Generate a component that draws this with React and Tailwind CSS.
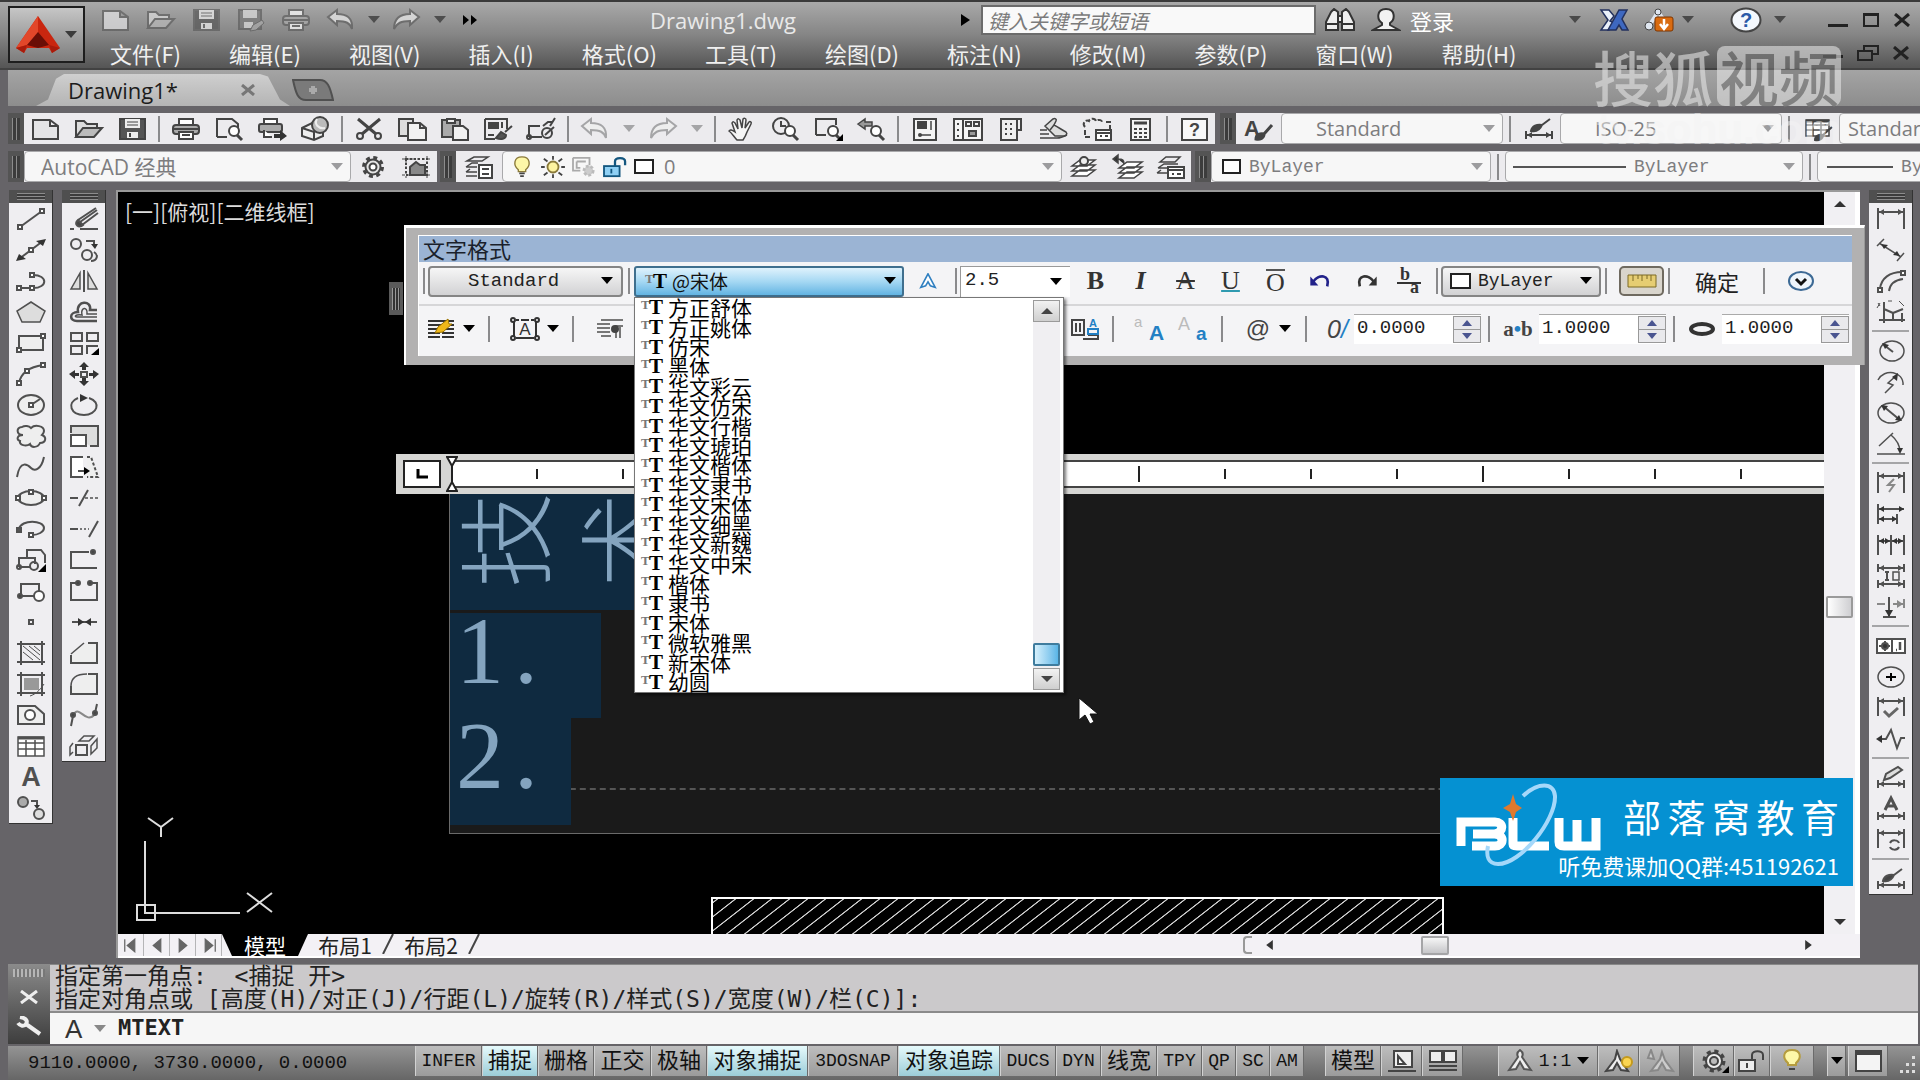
import clsx from 'clsx';

const dim = (y = 5) => (
  <>
    <path d={`M2 ${y}H28M2 ${y - 4}V${y + 4}M28 ${y - 4}V${y + 4}`} />
    <path d={`M3 ${y}l5-3v6zM27 ${y}l-5-3v6z`} fill="currentColor" stroke="none" />
  </>
);

const magnifier = (
  <>
    <circle cx="20" cy="14" r="5" fill="#fff" />
    <path d="M23 18l5 5" strokeWidth="3" />
  </>
);

const printer = (
  <>
    <path d="M8 8V2h14v6" fill="#fff" />
    <rect x="2" y="8" width="26" height="9" rx="3" fill="#aaa" />
    <path d="M2 12h26" />
    <rect x="8" y="15" width="14" height="7" fill="#fff" />
    <path d="M11 18h8" />
  </>
);

const layers = <path d="M3 21h15l8-6H11zM3 16h15l8-6H11zM3 11h15l8-6H11z" fill="#fff" strokeWidth="1.5" />;

const ICONS = {
  new: <path d="M2 3h17l8 6v13H2zM19 3v6h8" fill="#e4e4e6" />,
  open: (
    <>
      <path d="M2 20V4h8l3 3h10v4" fill="#ddd" />
      <path d="M2 20l7-9h19l-8 9z" fill="#bbb" />
    </>
  ),
  save: (
    <>
      <rect x="3" y="2" width="25" height="20" fill="#555" />
      <rect x="8" y="2" width="15" height="9" fill="#eee" stroke="none" />
      <path d="M10 5h11M10 8h11" strokeWidth="1" />
      <rect x="10" y="15" width="11" height="6" fill="#eee" stroke="none" />
      <path d="M13 16v4" />
    </>
  ),
  saveas: (
    <>
      <rect x="3" y="2" width="22" height="19" fill="#777" />
      <rect x="7" y="2" width="14" height="8" fill="#ddd" stroke="none" />
      <rect x="8" y="14" width="9" height="6" fill="#ddd" stroke="none" />
      <path d="M14 23l3-6 9-5 2 3-8 7z" fill="#aaa" strokeWidth="1" />
    </>
  ),
  print: printer,
  preview: (
    <>
      <path d="M3 20V2h15l6 5v4M3 20h10" />
      {magnifier}
    </>
  ),
  publish: (
    <>
      <path d="M7 7V2h13v5" fill="#fff" />
      <rect x="2" y="7" width="23" height="8" rx="2" fill="#aaa" />
      <path d="M7 13v7h8" fill="#fff" />
      <path d="M17 17h6v-4l7 6-7 5v-3h-6z" fill="#333" stroke="none" />
    </>
  ),
  print3d: (
    <>
      <path d="M2 11l10-5 11 4v9l-9 4-12-4zM2 11l12 4 9-4M14 15v8" fill="#eee" />
      <circle cx="20" cy="8" r="8" fill="#bbb" />
      <path d="M17 2c-3 5 1 10 8 9" stroke="#eee" />
    </>
  ),
  cut: (
    <>
      <path d="M4 2l18 15M26 2L8 17" strokeWidth="3" />
      <circle cx="6" cy="19" r="3" />
      <circle cx="24" cy="19" r="3" />
    </>
  ),
  copy: (
    <>
      <path d="M2 2h14v4h-5v13H2z" fill="#ddd" />
      <path d="M11 6h12l6 5v12H11zM23 6v5h6" fill="#f2f2f2" />
    </>
  ),
  paste: (
    <>
      <path d="M2 3h18v17H2z" fill="#aaa" />
      <path d="M7 2h8v4H7z" fill="#eee" />
      <path d="M13 9h10l5 4v10H13z" fill="#f2f2f2" />
    </>
  ),
  match: (
    <>
      <path d="M2 2h22v10M2 2v20h10" />
      <rect x="5" y="5" width="11" height="7" fill="currentColor" stroke="none" />
      <path d="M19 5v6M5 18h6" />
      <path d="M13 21l5-6 5 3c0 4-5 5-10 3zM22 15l7-6" fill="#555" />
    </>
  ),
  block: (
    <>
      <path d="M3 20V9h11M3 20h13M17 9l5-4h5M24 9l5-8" />
      <circle cx="21" cy="16" r="5" />
      <circle cx="3" cy="20" r="2" />
      <path d="M19 18l9-8" />
    </>
  ),
  undo: <path d="M2 9l9-7v4c10 0 16 4 15 15-2-6-6-8-15-8v4z" fill="#eee" />,
  redo: <path d="M28 9l-9-7v4C9 6 3 10 3 21c3-6 7-8 16-8v4z" fill="#eee" />,
  pan: (
    <path
      d="M10 23c-3-3-5-7-8-9 1-2 3-1 6 1L5 6c1-2 2-1 3 0l3 6-1-9c1-2 2-1 3 0l2 8 1-9c1-1 3-1 3 1l-1 8 4-6c1-1 3 0 2 2l-4 8c-1 3-2 5-4 8z"
      fill="#f5f5f5"
      strokeWidth="1.5"
    />
  ),
  zoomrt: (
    <>
      <circle cx="11" cy="9" r="8" />
      <path d="M11 4v5h5" />
      {magnifier}
    </>
  ),
  zoomwin: (
    <>
      <path d="M3 18V2h20v6M3 18h10" />
      {magnifier}
      <path d="M30 17v7h-7z" fill="#000" stroke="none" />
    </>
  ),
  zoomprev: (
    <>
      <path d="M2 7l7-5v3h7v4H9v3z" fill="#999" strokeWidth="1.5" />
      {magnifier}
    </>
  ),
  props: (
    <>
      <rect x="4" y="2" width="22" height="21" fill="#f4f4f4" />
      <rect x="7" y="4" width="10" height="8" fill="currentColor" stroke="none" />
      <path d="M21 4v9M9 18h12" strokeWidth="1.5" />
      <circle cx="10" cy="18" r="1" />
    </>
  ),
  design: (
    <>
      <rect x="1" y="2" width="28" height="21" fill="#f4f4f4" />
      <path d="M10 2v21M5 6v2M5 12v2M5 18v2" />
      <rect x="13" y="5" width="5" height="4" />
      <rect x="21" y="5" width="5" height="4" />
      <rect x="16" y="14" width="7" height="5" fill="#999" />
    </>
  ),
  palette: (
    <>
      <path d="M5 2h20v11h-4v10H5z" fill="#eee" />
      <path d="M21 2v11M9 7h2M14 7h2M9 12h2M14 12h2M9 17h2M14 17h2" />
    </>
  ),
  sheets: (
    <>
      <path d="M1 21h17c4 0 6-1 10-3M1 17h9M1 13h7" strokeWidth="1.5" />
      <path d="M6 9l8-7c2-1 4 0 3 2l-2 4c4 2 8 5 12 7 2 2 0 4-3 4h-8L6 9z" fill="#ddd" strokeWidth="1.5" />
      <path d="M15 8l-4 5" strokeWidth="1.5" />
    </>
  ),
  markup: (
    <>
      <path d="M3 10c-3-3 0-8 4-6 1-3 6-3 7 0 2-2 6-1 6 1M24 5h4v7M3 13v7h6" strokeDasharray="5 2" />
      <rect x="14" y="13" width="15" height="10" fill="#fff" />
      <path d="M14 16h15M18 19h2M23 19h3" />
    </>
  ),
  calc: (
    <>
      <rect x="6" y="2" width="19" height="21" fill="#f4f4f4" />
      <path d="M9 6h13" strokeWidth="3" />
      <path d="M9 12h3M14 12h3M19 12h3M9 16h3M14 16h3M19 16h3M9 20h3M14 20h3M19 20h3" />
    </>
  ),
  help: (
    <>
      <rect x="3" y="2" width="25" height="21" fill="#f8f8f8" />
      <text x="15.5" y="19" textAnchor="middle" fontSize="18" fontWeight="700" fill="currentColor" stroke="none">?</text>
    </>
  ),
  textstyle: (
    <>
      <text x="0" y="19" fontSize="22" fontWeight="700" fill="currentColor" stroke="none">A</text>
      <path d="M12 22c0-4 4-6 8-5 0 4-4 6-8 5zM20 17l8-9" fill="#444" strokeWidth="3" />
    </>
  ),
  dimstyle: (
    <>
      {dim(18)}
      <path d="M7 14c1-5 6-7 11-6-2 5-6 7-11 6zM18 8l8-6" fill="#444" />
    </>
  ),
  tablestyle: (
    <>
      <path d="M3 3h23v16H3zM3 8h23M3 13h23M10 3v16M18 3v16" strokeWidth="1.5" fill="#fff" />
      <path d="M3 4h23" strokeWidth="3" />
      <path d="M12 23c0-4 4-6 8-5 0 4-4 6-8 5zM20 18l9-8" fill="#444" />
    </>
  ),
  gear: (
    <>
      <circle cx="15" cy="12" r="9.5" strokeWidth="3" strokeDasharray="4 3.46" />
      <circle cx="15" cy="12" r="7.5" fill="#e4e4e4" />
      <circle cx="15" cy="12" r="3.5" fill="#fff" />
    </>
  ),
  workspace: (
    <>
      <path d="M5 4h21v16H5z" strokeDasharray="2 2" />
      <path d="M9 20v-8l6-5 4 3h5v10z" fill="#888" />
      <path d="M5 1v22M26 1v22M1 4h28M1 20h28" strokeWidth="1" strokeDasharray="3 2" />
    </>
  ),
  layerprops: (
    <>
      <path d="M3 6l7-4h14l-6 4zM2 12l6-4h6M2 12h11M2 17l4-3M2 17h11M2 21h11" strokeWidth="1.5" />
      <rect x="15" y="10" width="13" height="13" fill="#fff" />
      <path d="M18 14h7M18 19h7" />
    </>
  ),
  layercur: (
    <>
      {layers}
      <circle cx="15" cy="6" r="4" fill="#eee" />
    </>
  ),
  layerprev: (
    <>
      <g transform="translate(4 2)">{layers}</g>
      <path d="M1 4l5-4v8zM6 4c5 0 6 1 6 5" fill="#333" strokeWidth="1.5" />
    </>
  ),
  layerstate: (
    <>
      <path d="M5 7l6-5h14l-5 5zM3 13l6-4h14M3 13h9M2 18h10M2 18l4-3" strokeWidth="1.5" />
      <rect x="13" y="12" width="16" height="11" fill="#fff" />
      <path d="M13 15h16M17 19h2M22 19h4" />
    </>
  ),
  bulb: (
    <>
      <path d="M15 1c-9 0-10 9-4 14v2h8v-2c6-5 5-14-4-14z" fill="#fdf7a8" stroke="#8a7a3a" strokeWidth="1.5" />
      <path d="M12 19h6M13 22h4" />
    </>
  ),
  sun: (
    <>
      <path d="M15 0v4M15 20v4M2 12h4M24 12h4M5 3l4 3M21 18l4 3M25 3l-4 3M9 18l-4 3" />
      <circle cx="15" cy="12" r="6" fill="#fdf3a0" stroke="#8a7a3a" />
    </>
  ),
  vpfreeze: (
    <>
      <path d="M3 2h18v8M3 2v14h8M7 6h10M7 6v7h4" stroke="#aaa" />
      <circle cx="20" cy="16" r="5" fill="#ccc" stroke="#bbb" strokeDasharray="3 2" strokeWidth="3" />
    </>
  ),
  unlock: (
    <>
      <rect x="3" y="11" width="17" height="11" fill="#8fd0f4" stroke="#14577f" />
      <path d="M15 11V6c0-5 11-5 11 0v4" stroke="#14577f" strokeWidth="2.5" />
      <path d="M11 14v5" stroke="#14577f" />
    </>
  ),
  line: (
    <>
      <path d="M4 20L26 4" />
      <rect x="2" y="18" width="4" height="4" fill="#fff" />
      <rect x="24" y="2" width="4" height="4" fill="#fff" />
    </>
  ),
  xline: (
    <>
      <path d="M3 21L27 3" />
      <path d="M30 1l-3 7-7-5zM0 23l3-7 7 5z" fill="#333" stroke="none" />
      <rect x="13" y="10" width="4" height="4" fill="#fff" />
    </>
  ),
  pline: (
    <>
      <path d="M3 19h14c15 0 15-13 0-13" />
      <rect x="1" y="17" width="4" height="4" fill="#fff" />
      <rect x="14" y="17" width="4" height="4" fill="#fff" />
      <rect x="14" y="4" width="4" height="4" fill="#fff" />
    </>
  ),
  polygon: <path d="M15 2l14 9-5 11H6L1 11z" fill="#ddd" strokeWidth="1.5" />,
  rect: (
    <>
      <path d="M3 5h24v14H3z" fill="#eee" />
      <rect x="1" y="17" width="4" height="4" fill="#fff" />
      <rect x="25" y="3" width="4" height="4" fill="#fff" />
    </>
  ),
  arc: (
    <>
      <path d="M3 21C5 11 13 5 27 3" />
      <rect x="1" y="19" width="4" height="4" fill="#fff" />
      <rect x="9" y="7" width="4" height="4" fill="#fff" />
      <rect x="25" y="1" width="4" height="4" fill="#fff" />
    </>
  ),
  circle: (
    <>
      <ellipse cx="15" cy="12" rx="13" ry="10" fill="#eee" />
      <path d="M15 12l9-6" />
      <rect x="13" y="10" width="4" height="4" fill="#fff" />
    </>
  ),
  cloud: <path d="M7 11C0 11 0 3 6 3c3-2 7-1 9 1 4-4 13-2 13 3 0 2-1 3-2 4 5 2 4 8-2 8-2 5-9 5-10 1-4 3-11 1-10-3-4-1-3-6 3-6z" fill="#eee" />,
  spline: <path d="M1 22C4 4 12 10 15 13s10 3 13-11" />,
  ellipse: (
    <>
      <ellipse cx="15" cy="12" rx="13" ry="7" fill="#eee" />
      <rect x="0" y="10" width="4" height="4" fill="#fff" />
      <rect x="13" y="4" width="4" height="4" fill="#fff" />
      <rect x="26" y="10" width="4" height="4" fill="#fff" />
    </>
  ),
  ellipsearc: (
    <>
      <path d="M3 12C5 2 28 3 28 11c0 4-6 7-12 7" />
      <rect x="1" y="11" width="4" height="4" fill="#555" />
      <rect x="13" y="16" width="4" height="4" fill="#fff" />
    </>
  ),
  insert: (
    <>
      <path d="M11 9V2h14l4 5v8M3 19v-9h16v6M3 19h12" />
      <circle cx="3" cy="19" r="2" />
      <circle cx="18" cy="18" r="4" />
      <path d="M30 16v8h-8z" fill="#000" stroke="none" />
    </>
  ),
  makeblock: (
    <>
      <path d="M5 17V5h18v9M3 17h15" />
      <circle cx="4" cy="17" r="2" fill="#444" />
      <circle cx="23" cy="17" r="5" fill="#fff" />
    </>
  ),
  point: <rect x="13" y="10" width="4" height="4" />,
  hatch: (
    <>
      <path d="M1 3h28M1 21h28M5 0v24M26 0v24" />
      <path d="M7 5l17 14M7 11l10 8M13 5l11 9M18 5l6 5" strokeWidth="1" />
    </>
  ),
  gradient: (
    <>
      <path d="M1 3h28M1 21h28M5 0v24M26 0v24" />
      <rect x="8" y="6" width="15" height="12" fill="#999" stroke="none" />
      <path d="M14 24c6-2 10-6 14-12" strokeWidth="1" />
    </>
  ),
  region: (
    <>
      <path d="M2 3h17l9 8v10H2z" fill="#eee" />
      <circle cx="14" cy="12" r="5" fill="#fff" />
    </>
  ),
  table: (
    <>
      <path d="M2 3h26v19H2zM2 9h26M2 15h26M10 6v16M19 6v16" fill="#fff" strokeWidth="1.5" />
      <path d="M2 4h26" strokeWidth="3" />
    </>
  ),
  mtext: (
    <text x="15" y="21" textAnchor="middle" fontSize="27" fontWeight="700" fill="currentColor" stroke="none">A</text>
  ),
  addsel: (
    <>
      <circle cx="7" cy="6" r="5" fill="#aaa" />
      <circle cx="23" cy="18" r="5" fill="#ddd" />
      <path d="M15 5h6v5" />
      <path d="M18 9h6l-3 4z" fill="#333" stroke="none" />
    </>
  ),
  erase: (
    <>
      <path d="M1 22h4M11 22h18" />
      <path d="M9 13L27 1M13 18L29 6M11 15L28 3" />
      <path d="M9 13l5 5c-4 4-10-1-5-5z" fill="#444" />
    </>
  ),
  copyobj: (
    <>
      <circle cx="7" cy="6" r="5" />
      <circle cx="18" cy="17" r="5" />
      <path d="M25 14c5 3 3 9-3 9M17 3h8v4" />
      <path d="M22 6h7l-3 5z" fill="#333" stroke="none" />
    </>
  ),
  mirror: (
    <>
      <path d="M15 1v22" />
      <path d="M11 4v16H2zM19 4v16h9z" fill="#ddd" strokeWidth="1.5" />
    </>
  ),
  offset: (
    <>
      <path d="M28 21H8c-8 0-8-9 1-9C7 0 23 0 21 10h7" strokeWidth="2.5" />
      <path d="M28 17H8c-3 0-2-3 5-2-2-8 6-9 5-1h10" strokeWidth="1.5" />
    </>
  ),
  array: (
    <>
      <rect x="2" y="2" width="11" height="8" />
      <rect x="18" y="2" width="11" height="8" />
      <rect x="2" y="15" width="11" height="8" />
      <path d="M18 23v-8h11" />
      <path d="M30 17v7h-8z" fill="#000" stroke="none" />
    </>
  ),
  move: (
    <>
      <rect x="12" y="10" width="6" height="5" />
      <path d="M15 0l5 5h-3v3h-4V5h-3zM15 24l5-5h-3v-3h-4v3h-3zM0 12l6-4v3h4v3H6v3zM30 12l-6-4v3h-4v3h4v3z" fill="#333" stroke="none" />
    </>
  ),
  rotate: (
    <>
      <path d="M20 5c13 4 8 17-5 17S-3 10 9 5" />
      <path d="M11 1l8 4-8 4z" fill="#333" stroke="none" />
    </>
  ),
  scale: (
    <>
      <path d="M2 9V2h27v20h-8" fill="#ddd" />
      <rect x="2" y="11" width="15" height="11" fill="#fff" />
    </>
  ),
  stretch: (
    <>
      <path d="M14 22H2V2h12" fill="#fff" />
      <path d="M18 2h4l7 20H18" strokeDasharray="3 2" fill="#eee" />
      <path d="M9 16h8" />
      <path d="M15 12l6 4-6 4z" fill="#000" stroke="none" />
    </>
  ),
  trim: (
    <>
      <path d="M1 12h8M10 20l9-16" />
      <path d="M16 12h14" strokeDasharray="3 2" strokeWidth="1.5" />
    </>
  ),
  extend: (
    <>
      <path d="M1 12h8M20 20l9-16" />
      <path d="M11 12h9" strokeDasharray="2 2" strokeWidth="1.5" />
    </>
  ),
  breakpt: (
    <>
      <path d="M28 20H2V4h18" />
      <circle cx="24" cy="4" r="2" fill="#444" />
    </>
  ),
  break: (
    <>
      <path d="M8 4H2v17h26V4h-6" />
      <circle cx="9" cy="4" r="2" fill="#444" />
      <circle cx="21" cy="4" r="2" fill="#444" />
    </>
  ),
  join: (
    <>
      <path d="M3 12h25" />
      <path d="M9 8l6 4-6 4zM22 8l-6 4 6 4z" fill="#333" stroke="none" />
    </>
  ),
  chamfer: (
    <>
      <path d="M2 14v8h26V2h-9" fill="#eee" />
      <path d="M2 13L15 2" strokeWidth="1.5" />
    </>
  ),
  fillet: (
    <>
      <path d="M2 14v8h26V2h-9" fill="#eee" />
      <path d="M2 14C2 6 8 2 18 2" strokeWidth="1.5" />
    </>
  ),
  blend: (
    <>
      <path d="M2 23l2-10M26 10l2-9" />
      <path d="M4 13c6-14 12 10 22-2" stroke="#888" />
      <circle cx="4" cy="12" r="2" fill="#444" />
      <circle cx="26" cy="10" r="2" fill="#444" />
    </>
  ),
  explode: (
    <>
      <rect x="7" y="11" width="11" height="10" />
      <path d="M10 7l5-5h10l-5 5zM22 12l6-7v9l-6 6zM4 9l-3 4v8l3-3" strokeWidth="1.5" />
    </>
  ),
  dimlinear: (
    <>
      {dim(5)}
      <path d="M2 8v14M28 8v14" />
    </>
  ),
  dimaligned: (
    <>
      <path d="M3 5l22 14M1 8l7-7M21 23l7-8" strokeWidth="1.5" />
      <path d="M5 6l7 1-4 4zM24 18l-7-1 4-4z" fill="#333" stroke="none" />
    </>
  ),
  dimarc: (
    <>
      <path d="M4 20C5 9 14 3 26 3M13 22c1-7 6-11 14-12" />
      <rect x="2" y="19" width="4" height="4" fill="#fff" />
      <rect x="25" y="2" width="4" height="4" fill="#fff" />
    </>
  ),
  dimord: (
    <>
      <path d="M8 2v21M3 20h26M8 9l9 4v8M17 13l10-4M26 13v9" />
      <path d="M2 3l2 3M4 3L1 8M12 1h4M23 1l5 5" strokeWidth="1" />
    </>
  ),
  dimradius: (
    <>
      <ellipse cx="16" cy="12" rx="12" ry="10" strokeWidth="1.5" />
      <path d="M17 13L8 6" />
      <path d="M6 4l7 2-4 4z" fill="#333" stroke="none" />
    </>
  ),
  dimjog: (
    <>
      <path d="M2 10C8-2 28 1 27 15" strokeWidth="1.5" />
      <path d="M9 23l8-8-5-2 9-8" strokeWidth="1.5" />
      <path d="M22 3l-1 8-5-4z" fill="#333" stroke="none" />
    </>
  ),
  dimdiam: (
    <>
      <ellipse cx="15" cy="12" rx="13" ry="10" strokeWidth="1.5" />
      <path d="M7 5l17 14" />
      <path d="M5 4l7 1-4 5zM26 20l-7-1 4-5z" fill="#333" stroke="none" />
    </>
  ),
  dimang: (
    <>
      <path d="M1 22h28M3 14L17 1M15 3c6 5 9 10 9 17" strokeWidth="1.5" />
      <path d="M24 22l-3-6h6z" fill="#333" stroke="none" />
    </>
  ),
  dimquick: (
    <>
      {dim(5)}
      <path d="M2 8v14M28 8v14" />
      <path d="M18 8l-6 6h6l-5 7" stroke="#888" />
    </>
  ),
  dimbase: (
    <>
      <path d="M2 2v20M2 7h26M2 17h19M21 12v10" />
      <path d="M3 7l5-3v6zM28 7l-5-3v6zM3 17l5-3v6zM21 17l-5-3v6z" fill="#333" stroke="none" />
    </>
  ),
  dimcont: (
    <>
      <path d="M2 2v20M15 2v20M28 2v20M2 8h26" />
      <path d="M3 8l5-3v6zM14 8L9 5v6zM16 8l5-3v6zM27 8l-5-3v6z" fill="#333" stroke="none" />
    </>
  ),
  dimspace: (
    <>
      {dim(4)}
      {dim(20)}
      <path d="M11 8v8M9 8h4M9 16h4" />
      <rect x="17" y="8" width="6" height="8" strokeWidth="1.5" />
    </>
  ),
  dimbreak: (
    <>
      <path d="M13 2v19M7 22h13" />
      <path d="M1 9h8M17 9h10M28 4v9" stroke="#888" />
      <path d="M9 15h8l-4 7z" fill="#333" stroke="none" />
      <path d="M27 9l-6-4v8z" fill="#888" stroke="none" />
    </>
  ),
  tolerance: (
    <>
      <rect x="1" y="5" width="28" height="14" fill="#fff" />
      <path d="M16 5v14M3 12h11M9 7v10" />
      <circle cx="9" cy="12" r="3" fill="#333" />
      <path d="M24 8v8M20 16h1" strokeWidth="2.5" />
    </>
  ),
  centermark: (
    <>
      <ellipse cx="15" cy="12" rx="13" ry="10" strokeWidth="1.5" />
      <path d="M15 8v8M10 12h10" stroke="#000" />
    </>
  ),
  inspect: (
    <>
      {dim(5)}
      <path d="M2 8v12M28 8v12" />
      <path d="M8 15l5 5 9-8" strokeWidth="3" stroke="#666" />
    </>
  ),
  jogline: (
    <>
      <path d="M3 12h7l5-9 6 18 4-10h4" />
      <path d="M0 12l6-4v8z" fill="#333" stroke="none" />
    </>
  ),
  dimedit: (
    <>
      {dim(18)}
      <path d="M8 14l2-6L22 1l4 3-12 8z" fill="#ddd" />
    </>
  ),
  dimtedit: (
    <>
      {dim(19)}
      <path d="M9 13l6-12 6 12M11 9h8" strokeWidth="3" />
    </>
  ),
  dimupdate: (
    <>
      {dim(5)}
      <path d="M2 8v12M28 8v12M14 15c2-4 8-3 9 0M23 19c-2 4-8 3-9 0" />
    </>
  ),
};

function Icon({ name, className = 'w-[30px] h-[24px]' }) {
  return (
    <svg viewBox="0 0 30 24" className={clsx('shrink-0 overflow-visible', className)} fill="none" stroke="currentColor" strokeWidth="2" aria-hidden="true" fontFamily="Liberation Sans, sans-serif">
      {ICONS[name]}
    </svg>
  );
}

const Caret = ({ className = 'text-black' }) => (
  <svg viewBox="0 0 12 8" className={clsx('w-[12px] h-[8px] shrink-0 pointer-events-none', className)} fill="currentColor" aria-hidden="true">
    <path d="M0 0h12L6 7z" />
  </svg>
);

const Sep = ({ className = 'w-[11px]' }) => (
  <div className={clsx('flex justify-center items-center shrink-0', className)}>
    <div className="w-[2px] h-[26px] bg-[#8a8a8c]" />
  </div>
);

const Grip = ({ className = '' }) => (
  <div className={clsx('w-[16px] h-full shrink-0 bg-[#545454] flex items-center justify-center', className)}>
    <div className="w-[8px] h-[22px] bg-[repeating-linear-gradient(90deg,#8c8c8c_0_1px,#3c3c3c_1px_4px)]" />
  </div>
);

const Tool = ({ icon, className = 'w-[43px]' }) => (
  <button aria-label={icon} className={clsx('h-full shrink-0 flex items-center justify-center', className)}>
    <Icon name={icon} />
  </button>
);

const ToolGroup = ({ icons }) => icons.map((n) => <Tool key={n} icon={n} />);

// Flat grey drop-down used in the docked toolbars
function Combo({ label, value, className, inner = 'pl-[16px]', lead, font = "text-[20px] font-['Open_Sans','Noto_Sans_CJK_SC',sans-serif]" }) {
  return (
    <div className={clsx('h-full shrink-0 flex items-center gap-[8px] bg-[#f7f7f7] border border-[#a9a9ab] rounded-[4px] pr-[7px]', className)}>
      {lead}
      <select aria-label={label} className={clsx('flex-1 min-w-0 h-full appearance-none bg-transparent leading-[28px] text-[#7d7d7f] outline-none', inner, font)}>
        <option>{value}</option>
      </select>
      <Caret className="text-[#9c9c9e]" />
    </div>
  );
}

const MONO = "font-['Liberation_Mono','Noto_Sans_CJK_SC',monospace]";
const MONO_COMBO = "text-[18px] font-['Liberation_Mono','Noto_Sans_CJK_SC',monospace]";

const MENUS = ['文件(F)', '编辑(E)', '视图(V)', '插入(I)', '格式(O)', '工具(T)', '绘图(D)', '标注(N)', '修改(M)', '参数(P)', '窗口(W)', '帮助(H)'];

function Header() {
  return (
    <header className="h-[70px] shrink-0 flex border-t-2 border-t-[#3a3a3a] border-b-2 border-b-[#424242] bg-linear-to-b from-[#a9a9a9] via-[#858585] to-[#555555]">
      <button aria-label="应用程序菜单" className="ml-[8px] mt-[4px] w-[77px] h-[57px] shrink-0 flex items-center justify-center gap-[5px] border-2 border-[#1e1e1e] bg-linear-to-b from-[#c6c6c6] to-[#7e7e7e]">
        <svg viewBox="0 0 44 38" className="w-[44px] h-[38px]" aria-hidden="true">
          <path d="M22 0L0 32l8 5 3-5h22l3 5 8-5z" fill="#c9260f" />
          <path d="M22 0L0 32l11-3 11-9z" fill="#e2472a" />
          <path d="M22 16L11 29l11 3 11-3z" fill="#6a0e06" />
          <path d="M33 29l3 8 8-5zM11 29l-3 8-8-5z" fill="#a81c0c" />
        </svg>
        <Caret className="text-[#3b3b3b]" />
      </button>
      <div className="flex-1 min-w-0 flex flex-col">
        <div className="h-[36px] flex items-center pl-[8px]">
          <div className="flex items-center h-full text-[#5e5e5e]">
            {['new', 'open', 'save', 'saveas', 'print'].map((n) => <Tool key={n} icon={n} className="w-[45px] opacity-70" />)}
            <Tool icon="undo" className="w-[45px] opacity-70" />
            <button aria-label="放弃列表" className="w-[22px] flex justify-center"><Caret className="text-[#4e4e4e]" /></button>
            <Tool icon="redo" className="w-[41px] opacity-70" />
            <button aria-label="重做列表" className="w-[28px] flex justify-center"><Caret className="text-[#4e4e4e]" /></button>
            <button aria-label="更多" className="w-[32px] flex justify-center">
              <svg viewBox="0 0 14 10" className="w-[14px] h-[10px]" aria-hidden="true"><path d="M0 0l6 5-6 5zM8 0l6 5-6 5z" /></svg>
            </button>
          </div>
          <h1 className="flex-1 min-w-0 pl-[164px] text-[22px] leading-[28px] text-[#e9e9e9] whitespace-nowrap font-['Open_Sans',sans-serif]">Drawing1.dwg</h1>
          <svg viewBox="0 0 9 12" className="w-[9px] h-[12px] mr-[11px]" aria-hidden="true"><path d="M0 0l9 6-9 6z" /></svg>
          <input aria-label="搜索" placeholder="键入关键字或短语" className="w-[335px] h-[30px] px-[5px] border-2 border-[#6b6b6b] bg-[#f9f9f9] text-[20px] leading-[26px] italic placeholder:text-[#7b7b7b] font-['Noto_Sans_CJK_SC',sans-serif]" />
          <button aria-label="查找" className="w-[48px] flex justify-center">
            <svg viewBox="0 0 30 24" className="w-[30px] h-[24px]" fill="#eee" stroke="#333" strokeWidth="2" aria-hidden="true">
              <path d="M6 4l3-3 4 3v18H1v-8zM24 4l-3-3-4 3v18h12v-8zM13 8h4v6h-4zM1 16h12M17 16h12" />
            </svg>
          </button>
          <button className="w-[107px] flex items-center gap-[9px] pl-[7px] text-[22px] leading-[28px] text-white whitespace-nowrap font-['Noto_Sans_CJK_SC',sans-serif]">
            <svg viewBox="0 0 30 24" className="w-[30px] h-[24px]" fill="#f2f2f2" stroke="#333" strokeWidth="2" aria-hidden="true">
              <path d="M15 1c10 0 9 11 4 14v2l9 5H2l9-5v-2C6 12 5 1 15 1z" />
            </svg>
            登录
          </button>
          <Caret className="ml-[98px] text-[#4a4a4a]" />
          <button aria-label="Exchange" className="ml-[18px] w-[30px]">
            <svg viewBox="0 0 30 24" className="w-[30px] h-[24px]" stroke="#23315e" strokeWidth="1.5" aria-hidden="true">
              <path d="M2 2h8l5 6-4 5 4 2-5 7H2l7-10z" fill="#e9f0fa" />
              <path d="M28 2h-8L9 22h8l3-5 3 5h6l-6-11z" fill="#3e68c0" />
            </svg>
          </button>
          <button aria-label="保持连接" className="ml-[15px] w-[30px]">
            <svg viewBox="0 0 30 24" className="w-[30px] h-[24px]" fill="none" aria-hidden="true">
              <path d="M5 18L14 4l5 7" stroke="#dfe6f0" strokeWidth="4" />
              <circle cx="5" cy="18" r="4" fill="#dfe6f0" stroke="#444" />
              <circle cx="14" cy="4" r="3" fill="#dfe6f0" stroke="#444" />
              <rect x="11" y="9" width="18" height="14" rx="2" fill="#d96b10" stroke="#7c3500" />
              <path d="M20 11v9M16 16l4 5 4-5" stroke="#fff" strokeWidth="2.5" />
            </svg>
          </button>
          <Caret className="ml-[8px] text-[#4a4a4a]" />
          <button aria-label="帮助" className="ml-[36px] w-[32px]">
            <svg viewBox="0 0 32 26" className="w-[32px] h-[26px]" aria-hidden="true">
              <ellipse cx="16" cy="13" rx="14.5" ry="11.5" fill="#f4f8fd" stroke="#444" strokeWidth="2" />
              <text x="16" y="20" textAnchor="middle" fontSize="20" fontWeight="700" fill="#2a59a8" fontFamily="Liberation Sans">?</text>
            </svg>
          </button>
          <Caret className="ml-[12px] mr-[42px] text-[#4a4a4a]" />
          <div className="flex items-center gap-[15px] mr-[10px]">
            <button aria-label="最小化" className="w-[20px] h-[14px] border-b-[3px] border-[#222]" />
            <button aria-label="最大化" className="w-[16px] h-[14px] border-2 border-t-[3px] border-[#222]" />
            <button aria-label="关闭">
              <svg viewBox="0 0 16 14" className="w-[16px] h-[14px]" stroke="#222" strokeWidth="3" aria-hidden="true"><path d="M1 1l14 12M15 1L1 13" /></svg>
            </button>
          </div>
        </div>
        <nav className="h-[29px] flex items-center pl-[25px] pr-[11px]">
          <div className="flex gap-[48px] text-[22px] leading-[28px] text-[#f0f0f0] whitespace-nowrap font-['Noto_Sans_CJK_SC',sans-serif]">
            {MENUS.map((m) => <button key={m}>{m}</button>)}
          </div>
          <div className="ml-auto flex items-center gap-[14px]">
            <button aria-label="最小化图形" className="w-[20px] h-[10px] border-b-[3px] border-[#222]" />
            <button aria-label="还原图形">
              <svg viewBox="0 0 22 16" className="w-[22px] h-[16px]" fill="none" stroke="#222" strokeWidth="2" aria-hidden="true"><path d="M7 5V1h14v8h-6M1 6h14v9H1z" /></svg>
            </button>
            <button aria-label="关闭图形">
              <svg viewBox="0 0 16 14" className="w-[16px] h-[14px]" stroke="#222" strokeWidth="3" aria-hidden="true"><path d="M1 1l14 12M15 1L1 13" /></svg>
            </button>
          </div>
        </nav>
      </div>
    </header>
  );
}

const FileTabs = () => (
  <div className="h-[36px] shrink-0 ml-[8px] flex items-end bg-linear-to-b from-[#a4a4a4] to-[#8d8d8d]">
    <div className="ml-[28px] w-[254px] h-[32px] flex items-center pl-[32px] pr-[35px] bg-linear-to-b from-[#cfcfcf] to-[#b4b4b4] [clip-path:polygon(0_100%,12px_80%,20px_15%,28px_0,224px_0,232px_8%,244px_80%,100%_100%)]">
      <span className="flex-1 text-[22px] leading-[28px] text-[#1c1c1c] font-['Open_Sans',sans-serif]">Drawing1*</span>
      <button aria-label="关闭选项卡">
        <svg viewBox="0 0 14 12" className="w-[14px] h-[12px]" stroke="#777" strokeWidth="3" aria-hidden="true"><path d="M1 1l12 10M13 1L1 11" /></svg>
      </button>
    </div>
    <button aria-label="新建选项卡" className="mb-[4px] ml-[2px]">
      <svg viewBox="0 0 42 24" className="w-[42px] h-[24px]" fill="#7a7a7a" stroke="#505050" strokeWidth="2" aria-hidden="true">
        <path d="M1 2h27c7 0 10 6 13 20H14C6 22 4 16 1 2z" />
        <path d="M17 12h8M21 8v8" stroke="#aaa" strokeWidth="4" />
      </svg>
    </button>
  </div>
);

function Toolbars() {
  return (
    <>
      <div className="mt-[7px] ml-[8px] h-[31px] shrink-0 flex overflow-hidden text-[#444]">
        <Grip />
        <div className="flex shrink-0 items-center bg-[#ecebee]">
          <ToolGroup icons={['new', 'open', 'save']} /><Sep />
          <ToolGroup icons={['print', 'preview', 'publish', 'print3d']} /><Sep />
          <ToolGroup icons={['cut', 'copy', 'paste', 'match', 'block']} /><Sep />
          <Tool icon="undo" className="w-[43px] text-[#a5a5a7]" />
          <button aria-label="放弃列表" className="w-[25px] flex justify-center"><Caret className="text-[#a5a5a7]" /></button>
          <Tool icon="redo" className="w-[43px] text-[#a5a5a7]" />
          <button aria-label="重做列表" className="w-[25px] flex justify-center"><Caret className="text-[#a5a5a7]" /></button>
          <Sep />
          <ToolGroup icons={['pan', 'zoomrt', 'zoomwin', 'zoomprev']} /><Sep />
          <ToolGroup icons={['props', 'design', 'palette', 'sheets', 'markup', 'calc']} /><Sep />
          <Tool icon="help" />
        </div>
        <Grip className="ml-[5px]" />
        <div className="flex flex-1 min-w-0 items-center bg-[#ecebee]">
          <Tool icon="textstyle" className="w-[45px]" />
          <Combo label="文字样式" value="Standard" className="w-[222px]" inner="pl-[34px]" />
          <Sep className="w-[14px]" />
          <Tool icon="dimstyle" />
          <Combo label="标注样式" value="ISO-25" className="w-[222px]" inner="pl-[34px]" />
          <Sep className="w-[14px]" />
          <Tool icon="tablestyle" />
          <Combo label="表格样式" value="Standard" className="w-[222px]" inner="pl-[8px]" />
        </div>
      </div>
      <div className="mt-[7px] ml-[8px] h-[31px] shrink-0 flex overflow-hidden text-[#444]">
        <Grip />
        <div className="flex shrink-0 items-center bg-[#ecebee]">
          <Combo label="工作空间" value="AutoCAD 经典" className="w-[327px]" font="text-[21px] font-['Open_Sans','Noto_Sans_CJK_SC',sans-serif]" />
          <Tool icon="gear" /><Tool icon="workspace" />
        </div>
        <Grip className="ml-[3px]" />
        <div className="flex shrink-0 items-center bg-[#ecebee]">
          <Tool icon="layerprops" className="w-[46px]" />
          <Combo
            label="图层"
            value="0"
            className="w-[560px]"
            inner="pl-[2px]"
            lead={
              <div className="flex items-center gap-[3px] pl-[5px]">
                {['bulb', 'sun', 'vpfreeze', 'unlock'].map((n) => <Icon key={n} name={n} className="w-[28px] h-[22px]" />)}
                <span className="w-[20px] h-[15px] ml-[2px] border-2 border-[#222] bg-white" />
              </div>
            }
          />
          <Tool icon="layercur" /><Tool icon="layerprev" /><Tool icon="layerstate" />
        </div>
        <Grip className="ml-[4px]" />
        <div className="flex flex-1 min-w-0 items-center bg-[#ecebee]">
          <Combo label="颜色" value="ByLayer" className="w-[280px] pl-[10px]" inner="" font={MONO_COMBO} lead={<span className="w-[19px] h-[15px] border-2 border-[#222] bg-white" />} />
          <Sep className="w-[14px]" />
          <Combo label="线型" value="ByLayer" className="w-[298px] pl-[7px]" inner="" font={MONO_COMBO} lead={<span className="w-[113px] h-[2px] bg-[#555]" />} />
          <Sep className="w-[14px]" />
          <Combo label="线宽" value="ByLayer" className="w-[298px] pl-[9px]" inner="" font={MONO_COMBO} lead={<span className="w-[66px] h-[2px] bg-[#555]" />} />
        </div>
      </div>
    </>
  );
}

const DRAW = ['line', 'xline', 'pline', 'polygon', 'rect', 'arc', 'circle', 'cloud', 'spline', 'ellipse', 'ellipsearc', 'insert', 'makeblock', 'point', 'hatch', 'gradient', 'region', 'table', 'mtext', 'addsel'];
const MODIFY = ['erase', 'copyobj', 'mirror', 'offset', 'array', 'move', 'rotate', 'scale', 'stretch', 'trim', 'extend', 'breakpt', 'break', 'join', 'chamfer', 'fillet', 'blend', 'explode'];
const DIMENSION = ['dimlinear', 'dimaligned', 'dimarc', 'dimord', '|', 'dimradius', 'dimjog', 'dimdiam', 'dimang', '|', 'dimquick', 'dimbase', 'dimcont', 'dimspace', 'dimbreak', '|', 'tolerance', 'centermark', 'inspect', 'jogline', '|', 'dimedit', 'dimtedit', 'dimupdate', '|', 'dimstyle'];

const Palette = ({ icons }) => (
  <div className="w-[44px] shrink-0 self-start bg-[#efeef1] border-r border-b border-[#333] text-[#505050]">
    <div className="h-[13px] bg-[#4f4f4f] flex items-center justify-center">
      <div className="w-[28px] h-[7px] bg-[repeating-linear-gradient(0deg,#8c8c8c_0_1px,#3c3c3c_1px_3px)]" />
    </div>
    <div className="flex flex-col">
      {icons.map((n, i) => n === '|'
        ? <div key={i} className="h-[8px] flex items-center px-[3px]"><div className="h-[2px] w-full bg-[#a5a5a7]" /></div>
        : <button key={n} aria-label={n} className="h-[31px] flex items-center justify-center"><Icon name={n} /></button>)}
    </div>
  </div>
);

const FONTS = ['方正舒体', '方正姚体', '仿宋', '黑体', '华文彩云', '华文仿宋', '华文行楷', '华文琥珀', '华文楷体', '华文隶书', '华文宋体', '华文细黑', '华文新魏', '华文中宋', '楷体', '隶书', '宋体', '微软雅黑', '新宋体', '幼圆'];

const TrueType = () => (
  <svg viewBox="0 0 22 18" className="w-[22px] h-[18px] shrink-0 overflow-visible" fontFamily="Liberation Serif" fontWeight="700" aria-hidden="true">
    <text x="0" y="11" fontSize="13" fill="#777">T</text>
    <text x="8" y="16" fontSize="21" fill="#000">T</text>
  </svg>
);

const ScrollButton = ({ up }) => (
  <button aria-label={up ? '向上滚动' : '向下滚动'} className="w-[27px] h-[22px] shrink-0 flex items-center justify-center border border-[#9a9a9a] bg-linear-to-b from-[#f2f2f2] to-[#cfcfcf]">
    <svg viewBox="0 0 12 6" className="w-[12px] h-[6px]" fill="#444" aria-hidden="true"><path d={up ? 'M0 6h12L6 0z' : 'M0 0h12L6 6z'} /></svg>
  </button>
);

const FontList = () => (
  <div className="absolute left-[-2px] top-[29px] z-30 w-[430px] h-[396px] flex bg-white border border-[#777] pl-[6px] pr-[3px] shadow-[2px_2px_3px_#0008]">
    <ul role="listbox" aria-label="字体列表" className="flex-1 flex flex-col font-['Noto_Sans_CJK_SC',sans-serif] text-[21px] leading-[19px] text-black">
      {FONTS.map((f) => (
        <li key={f} role="option" aria-selected="false" className="flex-1 min-h-0 flex items-center gap-[5px]"><TrueType />{f}</li>
      ))}
    </ul>
    <div className="w-[27px] my-[2px] flex flex-col bg-[#f0eff2]">
      <ScrollButton up />
      <div className="mt-auto mb-[2px] h-[23px] border-2 border-[#3f7c9e] rounded-[2px] bg-linear-to-r from-[#d5f0fc] to-[#59b5e6]" />
      <ScrollButton />
    </div>
  </div>
);

const FmtButton = ({ label, className = 'w-[45px]', children }) => (
  <button aria-label={label} className={clsx('h-[30px] shrink-0 flex items-center justify-center', className)}>{children}</button>
);

const Spinner = ({ label, value, className = 'w-[127px]' }) => (
  <div className={clsx('h-[30px] shrink-0 flex bg-white border-t border-[#aaa]', className)}>
    <input aria-label={label} defaultValue={value} className={clsx('flex-1 min-w-0 pl-[3px] pb-[3px] text-[19px] leading-[24px] text-[#222] outline-none', MONO)} />
    <div className="w-[28px] my-[1px] flex flex-col border border-[#999] bg-[#e9e9ec]">
      <button aria-label={`${label} +`} className="flex-1 flex items-center justify-center border-b border-[#999]">
        <svg viewBox="0 0 10 6" className="w-[10px] h-[6px]" fill="#4a5590" aria-hidden="true"><path d="M0 6h10L5 0z" /></svg>
      </button>
      <button aria-label={`${label} -`} className="flex-1 flex items-center justify-center">
        <svg viewBox="0 0 10 6" className="w-[10px] h-[6px]" fill="#4a5590" aria-hidden="true"><path d="M0 0h10L5 6z" /></svg>
      </button>
    </div>
  </div>
);

function TextFormat() {
  return (
    <section className="absolute z-20 left-[286px] right-[-5px] top-[33px] border-t-[3px] border-l-2 border-white border-r border-r-[#999] bg-[#b2b1b1] pl-[12px] pr-[12px] pt-[7px] pb-[9px]">
      <div className="bg-[#f4f4f6] border-t border-l border-white">
        <h2 className="h-[26px] px-[4px] bg-[#9bb4d4] text-[22px] leading-[24px] text-[#1a1f2b] font-['Noto_Sans_CJK_SC',sans-serif]">文字格式</h2>
        <div className="h-[44px] pb-[4px] flex items-center border-b-2 border-[#d6d6d8]">
          <Sep className="w-[9px]" />
          <div className="w-[195px] h-[31px] shrink-0 flex items-center pr-[8px] border-2 border-[#858585] rounded-[4px] bg-linear-to-b from-[#f6f6f6] to-[#d2d2d4]">
            <select aria-label="样式" className={clsx('flex-1 min-w-0 h-full appearance-none pl-[38px] text-[19px] leading-[26px] text-[#222] outline-none', MONO)}>
              <option>Standard</option>
            </select>
            <Caret className="text-black" />
          </div>
          <Sep />
          <div className="relative w-[270px] h-[31px] shrink-0 flex items-center pl-[9px] pr-[6px] border-2 border-[#3f6f8e] rounded-[3px] bg-linear-to-b from-[#dff2fc] via-[#a5d8f3] to-[#62b4e2]">
            <TrueType />
            <select aria-label="字体" className="flex-1 min-w-0 h-full appearance-none pl-[5px] text-[19px] leading-[24px] text-[#111] outline-none font-['Noto_Sans_CJK_SC',sans-serif]">
              <option>@宋体</option>
            </select>
            <Caret className="text-black" />
            <FontList />
          </div>
          <FmtButton label="注释性" className="w-[47px]">
            <svg viewBox="0 0 22 20" className="w-[20px] h-[16px]" fill="#fff" stroke="#2f7fc0" strokeWidth="2" aria-hidden="true"><path d="M11 1l9 17-6-2-3-5-3 5-6 2z" /></svg>
          </FmtButton>
          <Sep className="w-[9px]" />
          <div className="w-[110px] h-[31px] shrink-0 flex items-center pr-[8px] bg-white border-t border-l border-[#999]">
            <input aria-label="文字高度" defaultValue="2.5" className={clsx('flex-1 min-w-0 pl-[4px] pb-[4px] text-[19px] leading-[24px] text-[#222] outline-none', MONO)} />
            <Caret className="text-black" />
          </div>
          <div className="ml-[3px] flex items-center text-[26px] leading-[30px] text-[#333] font-['Liberation_Serif',serif]">
            <FmtButton><b>B</b></FmtButton>
            <FmtButton><i className="font-bold">I</i></FmtButton>
            <FmtButton><span className="line-through decoration-2">A</span></FmtButton>
            <FmtButton><span className="underline decoration-2 decoration-[#2f9ab0]">U</span></FmtButton>
            <FmtButton><span className="h-[24px] border-t-2 border-[#555] leading-[24px]">O</span></FmtButton>
            <FmtButton label="放弃">
              <svg viewBox="0 0 26 18" className="w-[24px] h-[16px]" fill="none" stroke="#22228a" strokeWidth="3" aria-hidden="true"><path d="M4 10C10 1 24 1 20 15" /><path d="M1 4v10h9z" fill="#22228a" stroke="none" /></svg>
            </FmtButton>
            <FmtButton label="重做">
              <svg viewBox="0 0 26 18" className="w-[24px] h-[16px]" fill="none" stroke="#333" strokeWidth="3" aria-hidden="true"><path d="M22 10C16 1 2 1 6 15" /><path d="M25 4v10h-9z" fill="#333" stroke="none" /></svg>
            </FmtButton>
            <FmtButton label="堆叠">
              <svg viewBox="0 0 28 26" className="w-[28px] h-[26px] overflow-visible" fill="#333" fontFamily="Liberation Serif" fontWeight="700" fontSize="18" aria-hidden="true"><text x="3" y="12">b</text><text x="13" y="25">a</text><path d="M0 14h24v2H0z" /></svg>
            </FmtButton>
          </div>
          <Sep className="w-[8px]" />
          <div className="w-[160px] h-[31px] shrink-0 flex items-center gap-[7px] pl-[7px] pr-[7px] border-2 border-[#858585] rounded-[4px] bg-linear-to-b from-[#f6f6f6] to-[#d2d2d4]">
            <span className="w-[21px] h-[16px] border-2 border-[#222] bg-white" />
            <select aria-label="文字颜色" className={clsx('flex-1 min-w-0 h-full appearance-none text-[18px] leading-[26px] text-[#222] outline-none', MONO)}>
              <option>ByLayer</option>
            </select>
            <Caret className="text-black" />
          </div>
          <Sep className="w-[10px]" />
          <FmtButton label="标尺" className="ml-[8px] w-[45px] border-2 border-[#6f6a60] rounded-[5px] bg-[#d9d5cd]">
            <svg viewBox="0 0 30 14" className="w-[30px] h-[14px]" fill="#e6cd72" stroke="#7d6a25" aria-hidden="true"><path d="M1 1h28v12H1zM6 1v6M11 1v4M15 1v6M20 1v4M24 1v6" /></svg>
          </FmtButton>
          <Sep className="w-[10px]" />
          <button className="w-[86px] shrink-0 text-[22px] leading-[28px] text-[#222] font-['Noto_Sans_CJK_SC',sans-serif]">确定</button>
          <Sep className="w-[8px]" />
          <FmtButton label="选项" className="w-[66px]">
            <svg viewBox="0 0 28 20" className="w-[28px] h-[20px]" fill="#eef5fb" stroke="#3d6a95" strokeWidth="2" aria-hidden="true"><ellipse cx="14" cy="10" rx="12" ry="9" /><path d="M9 8l5 5 5-5" stroke="#111" strokeWidth="3" fill="none" /></svg>
          </FmtButton>
        </div>
        <div className="h-[50px] pb-[5px] flex items-center text-[#444]">
          <FmtButton label="分栏" className="w-[44px]">
            <svg viewBox="0 0 28 22" className="w-[28px] h-[22px]" stroke="#333" strokeWidth="2" fill="none" aria-hidden="true"><path d="M1 3h26M1 7h26M1 11h26M1 15h12M15 15h12M1 19h12M15 19h12" /><path d="M8 15l3-6 10-8 1 5 3 0-9 8z" fill="#f0b81a" stroke="#9a7200" strokeWidth="1" /></svg>
          </FmtButton>
          <Caret className="text-black" />
          <Sep className="w-[28px]" />
          <FmtButton label="多行文字对正" className="w-[44px]">
            <svg viewBox="0 0 30 24" className="w-[30px] h-[24px]" fill="none" stroke="#333" strokeWidth="2" fontFamily="Liberation Sans" aria-hidden="true">
              <path d="M4 5v14M26 5v14M6 3h3M21 3h3M6 21h18M11 3h8" /><circle cx="3" cy="3" r="2" /><circle cx="27" cy="3" r="2" /><circle cx="3" cy="21" r="2" /><circle cx="27" cy="21" r="2" />
              <text x="15" y="18" textAnchor="middle" fontSize="17" fill="#333" stroke="none">A</text>
            </svg>
          </FmtButton>
          <Caret className="text-black" />
          <Sep className="w-[28px]" />
          <FmtButton label="段落" className="w-[46px]">
            <svg viewBox="0 0 28 22" className="w-[28px] h-[22px]" stroke="#777" strokeWidth="2" fill="none" aria-hidden="true"><path d="M5 2h22M1 6h13M1 10h13M1 14h13M5 18h10M20 20V8h7M24 8v12" /><circle cx="19" cy="11" r="3" fill="#444" stroke="#444" /></svg>
          </FmtButton>
          <div className="flex-1" />
          <FmtButton label="插入字段" className="w-[44px]">
            <svg viewBox="0 0 28 22" className="w-[28px] h-[22px] overflow-visible" fill="none" stroke="#444" strokeWidth="2" fontFamily="Liberation Sans" aria-hidden="true"><path d="M1 2h12v15H1zM5 5v9M9 5v9M12 21h15v-4H17" /><text x="18" y="9" fontSize="11" fontWeight="700" fill="#2380c4" stroke="none">A</text><path d="M17 11h10v5H17z" stroke="#2380c4" /></svg>
          </FmtButton>
          <Sep className="w-[12px]" />
          <FmtButton label="大写" className="ml-[9px] w-[44px]">
            <svg viewBox="0 0 32 24" className="w-[32px] h-[24px] overflow-visible" fontFamily="Liberation Sans" aria-hidden="true"><text x="0" y="10" fontSize="15" fill="#bbb">a</text><text x="15" y="23" fontSize="21" fontWeight="700" fill="#2380c4">A</text></svg>
          </FmtButton>
          <FmtButton label="小写" className="w-[44px]">
            <svg viewBox="0 0 32 24" className="w-[32px] h-[24px] overflow-visible" fontFamily="Liberation Sans" aria-hidden="true"><text x="0" y="13" fontSize="18" fill="#bbb">A</text><text x="18" y="23" fontSize="19" fontWeight="700" fill="#2380c4">a</text></svg>
          </FmtButton>
          <Sep className="w-[12px]" />
          <FmtButton label="符号" className="ml-[9px] w-[42px]"><span className="text-[24px] leading-[28px] font-['Liberation_Sans',sans-serif]">@</span></FmtButton>
          <Caret className="text-black" />
          <Sep className="w-[30px]" />
          <span className="w-[33px] shrink-0 text-[25px] leading-[28px] italic text-center font-['Liberation_Sans',sans-serif]">0<span className="text-[#2380c4]">/</span></span>
          <Spinner label="倾斜角度" value="0.0000" />
          <Sep className="w-[16px]" />
          <span className="w-[42px] shrink-0 text-[21px] leading-[26px] font-bold text-center font-['Liberation_Serif',serif]">a<span className="text-[#2380c4]">•</span>b</span>
          <Spinner label="追踪" value="1.0000" />
          <Sep className="w-[16px]" />
          <span className="w-[40px] shrink-0 flex justify-center">
            <svg viewBox="0 0 28 16" className="w-[28px] h-[16px]" fill="none" stroke="#333" aria-hidden="true"><ellipse cx="14" cy="8" rx="11" ry="5" strokeWidth="4" /></svg>
          </span>
          <Spinner label="宽度因子" value="1.0000" className="w-[127px] mr-[3px]" />
        </div>
      </div>
    </section>
  );
}

const TICKS = Array.from({ length: 15 }, (_, i) => ({ x: (i + 1) * 86, tall: (i + 1) % 4 === 0 }));

const Ruler = () => (
  <div className="absolute left-[278px] right-0 top-[262px] h-[40px] flex items-center gap-[10px] pl-[7px] bg-[#d6d6d4]">
    <button aria-label="制表位" className="w-[38px] h-[28px] shrink-0 flex items-center justify-center border-2 border-[#222] bg-white text-black">
      <svg viewBox="0 0 12 10" className="w-[12px] h-[10px]" fill="none" stroke="#000" strokeWidth="3" aria-hidden="true"><path d="M2 0v8h10" /></svg>
    </button>
    <div className="relative flex-1 h-[28px] border-y-2 border-[#444] bg-white">
      <svg viewBox="0 0 12 36" className="absolute left-[-5px] top-[-6px] w-[12px] h-[36px]" fill="#fff" stroke="#222" strokeWidth="2" aria-hidden="true"><path d="M1 1h10L6 10zM6 10v16M1 35h10L6 26z" /></svg>
      <svg className="w-full h-full" stroke="#222" strokeWidth="2" aria-hidden="true">
        {TICKS.map((t) => <path key={t.x} d={t.tall ? `M${t.x} 4v16` : `M${t.x} 7v10`} />)}
      </svg>
    </div>
  </div>
);

const Editor = () => (
  <div className="absolute left-[331px] right-0 top-[302px] h-[340px] border-l border-b border-[#6a6a6a] bg-[#1a1a1a] text-[96px] leading-[76px] text-[#84a4bf] font-['Liberation_Serif','Noto_Sans_CJK_SC',serif]">
    <div className="absolute left-0 right-0 top-[294px] border-t-2 border-dashed border-[#555]" />
    <div className="relative flex w-[480px] h-[116px] bg-[#0f2a40] font-light">
      {['技', '术', '要', '求'].map((c) => <span key={c} className="w-[120px] h-[92px] flex items-center justify-center -rotate-90">{c}</span>)}
    </div>
    <div className="relative mt-[3px] w-[151px] h-[105px] flex pl-[6px] bg-[#0f2a40]"><span className="w-[58px]">1</span><span>.</span></div>
    <div className="relative w-[121px] h-[107px] flex pl-[6px] bg-[#0f2a40]"><span className="w-[58px]">2</span><span>.</span></div>
  </div>
);

const Banner = () => (
  <aside className="absolute z-10 right-[7px] top-[586px] w-[413px] h-[108px] flex flex-col justify-between pt-[14px] pb-[8px] pr-[14px] bg-[#0591d2] text-white font-['Noto_Sans_CJK_SC',sans-serif]">
    <svg viewBox="0 0 150 92" className="absolute left-[15px] top-[4px] w-[150px] h-[92px]" fill="none" aria-hidden="true">
      <g stroke="#fff" strokeWidth="9">
        <path d="M6 64V40h34c9 0 9 10 0 12H18h22c10 1 9 12 0 12H17" />
        <path d="M58 36v26c0 2 2 2 4 2h32" />
        <path d="M104 36v24c0 4 2 4 5 4h32V36M122 38v26" />
      </g>
      <path d="M68 14C83 0 99 0 100 14c1 24-34 68-57 68-10 0-12-8-10-18" stroke="#a5d8fa" strokeWidth="4" />
      <path d="M58 12l3 10 6 4-6 4-3 9-3-9-7-4 7-4z" fill="#e0792c" />
    </svg>
    <p className="flex justify-between pl-[183px] text-[38px] leading-[48px]">{[...'部落窝教育'].map((c) => <span key={c}>{c}</span>)}</p>
    <p className="text-right text-[22px] leading-[26px]">听免费课加QQ群:451192621</p>
  </aside>
);

const Drawing = () => (
  <div className="relative flex-1 min-w-0 overflow-hidden bg-black">
    <p className="pt-[6px] pl-[7px] text-[21px] leading-[26px] text-[#dcdcdc] font-['Noto_Sans_CJK_SC',sans-serif]">[一][俯视][二维线框]</p>
    <div className="absolute left-[271px] top-[90px] w-[14px] h-[33px] flex items-center justify-center bg-[#5a5a5a]">
      <div className="w-[8px] h-[22px] bg-[repeating-linear-gradient(90deg,#999_0_1px,#333_1px_3px)]" />
    </div>
    <Ruler />
    <Editor />
    <svg viewBox="0 0 140 106" className="absolute left-[18px] top-[624px] w-[140px] h-[106px]" fill="none" stroke="#ddd" strokeWidth="2" aria-hidden="true">
      <path d="M12 2l13 9 12-9M25 11v10M9 25v72h95M1 89h18v15H1zM111 77l25 19M136 77l-25 19" />
    </svg>
    <svg className="absolute left-[593px] top-[705px] w-[733px] h-[40px]" aria-hidden="true">
      <defs>
        <pattern id="ansi31" width="18" height="40" patternUnits="userSpaceOnUse" patternTransform="skewX(-52)">
          <path d="M9 0v40" stroke="#d0d0d0" strokeWidth="2" />
        </pattern>
      </defs>
      <rect x="1" y="1" width="731" height="60" fill="url(#ansi31)" stroke="#fff" strokeWidth="2" />
    </svg>
    <svg viewBox="0 0 24 30" className="absolute z-30 left-[960px] top-[505px] w-[24px] h-[30px]" aria-hidden="true">
      <path d="M1 1v22l6-5 5 9 4-2-4-8h8z" fill="#fff" stroke="#111" />
    </svg>
  </div>
);

function DrawingWindow() {
  return (
    <main className="relative flex-1 min-w-0 flex flex-col border-l-2 border-t-2 border-[#9a9a9a]">
      <div className="flex-1 min-h-0 flex">
        <Drawing />
        <div className="relative w-[36px] shrink-0 flex flex-col items-center justify-between py-[9px] bg-[#f1f0f3] border-r-[5px] border-white">
          <svg viewBox="0 0 12 6" className="w-[12px] h-[6px]" fill="#333" aria-hidden="true"><path d="M0 6h12L6 0z" /></svg>
          <div className="absolute top-[404px] w-[27px] h-[22px] border-2 border-[#9a9a9a] rounded-[2px] bg-linear-to-r from-white to-[#cfcfd2]" />
          <svg viewBox="0 0 12 6" className="w-[12px] h-[6px]" fill="#333" aria-hidden="true"><path d="M0 0h12L6 6z" /></svg>
        </div>
      </div>
      <div className="h-[24px] shrink-0 flex bg-[#f3f1f5] border-b-2 border-white font-['Noto_Sans_CJK_SC',sans-serif]">
        {['M9 1L3 6l6 5zM1 1v10', 'M9 1L3 6l6 5z', 'M3 1l6 5-6 5z', 'M3 1l6 5-6 5zM11 1v10'].map((d) => (
          <button key={d} aria-label="切换布局" className="w-[26px] flex items-center justify-center border-r border-[#b5b5b7]">
            <svg viewBox="0 0 12 12" className="w-[16px] h-[15px]" fill="#666" stroke="#666" aria-hidden="true"><path d={d} /></svg>
          </button>
        ))}
        <button className="w-[86px] text-[21px] leading-[22px] text-white bg-black [clip-path:polygon(0_0,100%_0,76px_100%,10px_100%)]">模型</button>
        <button className="w-[74px] text-[21px] leading-[22px] text-[#222]">布局1</button>
        <svg viewBox="0 0 12 20" className="w-[12px] h-[20px]" stroke="#444" strokeWidth="2" aria-hidden="true"><path d="M1 20L11 0" /></svg>
        <button className="w-[74px] text-[21px] leading-[22px] text-[#222]">布局2</button>
        <svg viewBox="0 0 12 20" className="w-[12px] h-[20px]" stroke="#444" strokeWidth="2" aria-hidden="true"><path d="M1 20L11 0" /></svg>
        <div className="ml-auto w-[617px] flex items-center">
          <div className="w-[9px] h-[18px] border-2 border-r-0 border-[#999] rounded-l-[4px]" />
          <svg viewBox="0 0 8 12" className="ml-[14px] w-[7px] h-[10px]" fill="#333" aria-hidden="true"><path d="M8 0v12L0 6z" /></svg>
          <div className="ml-[148px] w-[28px] h-[19px] border-2 border-[#a5a5a7] rounded-[2px] bg-linear-to-b from-[#f6f6f6] to-[#c6c6c9]" />
          <svg viewBox="0 0 8 12" className="ml-auto mr-[48px] w-[7px] h-[10px]" fill="#333" aria-hidden="true"><path d="M0 0v12l8-6z" /></svg>
        </div>
      </div>
      <TextFormat />
      <Banner />
    </main>
  );
}

const CommandLine = () => (
  <section className="mt-[6px] ml-[8px] mr-[2px] h-[80px] shrink-0 flex">
    <div className="w-[42px] shrink-0 flex flex-col items-center justify-between pt-[5px] pb-[8px] bg-linear-to-b from-[#8b8b8b] to-[#3e3e3e]">
      <div className="w-[32px] h-[8px] bg-[repeating-linear-gradient(90deg,#b5b5b5_0_2px,#777_2px_4px)]" />
      <button aria-label="关闭命令行">
        <svg viewBox="0 0 18 14" className="w-[18px] h-[14px]" stroke="#eee" strokeWidth="3" aria-hidden="true"><path d="M1 1l16 12M17 1L1 13" /></svg>
      </button>
      <button aria-label="自定义">
        <svg viewBox="0 0 26 20" className="w-[26px] h-[20px]" stroke="#eee" strokeWidth="4" fill="none" aria-hidden="true"><path d="M10 8l14 10M4 1c6 1 8 4 6 7s-6 2-8-1" /></svg>
      </button>
    </div>
    <div className="flex-1 min-w-0 flex flex-col border-t border-[#888]">
      <div className="h-[48px] px-[5px] bg-[#cbc9cb] border-b-2 border-[#8b8b8b] text-[23px] leading-[23px] text-[#222] whitespace-pre font-['DejaVu_Sans_Mono','Noto_Sans_CJK_SC',monospace]">
        <p>{'指定第一角点:  <捕捉 开>'}</p>
        <p>指定对角点或 [高度(H)/对正(J)/行距(L)/旋转(R)/样式(S)/宽度(W)/栏(C)]:</p>
      </div>
      <label className="flex-1 flex items-center pl-[13px] bg-[#f6f6f6] text-[26px] leading-[30px] text-[#333] font-['Liberation_Sans',sans-serif]">
        <span className="w-[28px] pl-[2px]">A</span>
        <span className="ml-[3px]"><Caret className="text-[#888]" /></span>
        <input aria-label="命令" defaultValue="MTEXT" className="ml-[12px] flex-1 bg-transparent pb-[2px] text-[22px] leading-[26px] font-bold text-[#222] outline-none font-['DejaVu_Sans_Mono',monospace]" />
      </label>
    </div>
  </section>
);

const MODES = [
  ['INFER', 'w-[67px]'], ['捕捉', 'w-[56px]', true], ['栅格', 'w-[56px]'], ['正交', 'w-[57px]'], ['极轴', 'w-[56px]'],
  ['对象捕捉', 'w-[101px]', true], ['3DOSNAP', 'w-[90px]'], ['对象追踪', 'w-[102px]', true], ['DUCS', 'w-[56px]'], ['DYN', 'w-[45px]'],
  ['线宽', 'w-[56px]'], ['TPY', 'w-[45px]'], ['QP', 'w-[34px]'], ['SC', 'w-[34px]'], ['AM', 'w-[34px]'],
];

const STATUS_BTN = 'h-[30px] shrink-0 flex items-center justify-center whitespace-nowrap border-r border-[#6b6b6b] border-l border-l-[#d2d2d2]';
const GREY = 'bg-linear-to-b from-[#bebebe] to-[#9b9b9b]';

const StatusIcon = ({ label, className, children }) => (
  <button aria-label={label} className={clsx(STATUS_BTN, GREY, className)}>
    <svg viewBox="0 0 30 24" className="w-[30px] h-[24px]" fill="none" stroke="#444" strokeWidth="2" aria-hidden="true">{children}</svg>
  </button>
);

function StatusBar() {
  return (
    <footer className={clsx('mt-[2px] ml-[8px] h-[34px] shrink-0 flex items-start bg-linear-to-b from-[#949494] to-[#666] text-[18px] leading-[26px] text-[#111]', MONO)}>
      <p className="w-[407px] shrink-0 pl-[20px] pt-[4px] text-[19px] whitespace-pre">9110.0000, 3730.0000, 0.0000</p>
      {MODES.map(([name, w, on]) => (
        <button key={name} aria-pressed={!!on} className={clsx(STATUS_BTN, w, /[A-Z]/.test(name) ? 'text-[18px]' : 'pt-[3px] text-[22px]', on ? 'bg-linear-to-b from-[#e6fafc] to-[#9ccdd8]' : GREY)}>{name}</button>
      ))}
      <div className="flex-1" />
      <button className={clsx(STATUS_BTN, GREY, 'w-[56px] pt-[3px] text-[22px]')}>模型</button>
      <StatusIcon label="快速查看布局" className="w-[41px]"><path d="M7 2h18v16H7zM1 22h28" fill="#eee" /><path d="M11 7v8h7z" fill="#fff" /></StatusIcon>
      <StatusIcon label="快速查看图形" className="w-[41px]"><path d="M2 2h12v11H2zM16 2h12v11H16z" fill="#eee" /><path d="M1 17h28M1 21h28" /></StatusIcon>
      <button className={clsx(STATUS_BTN, GREY, 'ml-[35px] w-[100px] gap-[6px]')}>
        <svg viewBox="0 0 26 24" className="w-[26px] h-[24px]" fill="#eee" stroke="#555" strokeWidth="2" aria-hidden="true"><path d="M13 1c3 2 3 5 2 7l9 13-7-1-4-7-4 7-7 1 9-13c-1-2-1-5 2-7z" /></svg>
        1:1
        <Caret className="text-black" />
      </button>
      <StatusIcon label="注释可见性" className="w-[41px]"><path d="M13 2l3 8 8 12-7-1-4-7-4 7-7 1 9-12z" fill="#eee" /><circle cx="23" cy="13" r="5" fill="#fbd552" stroke="#c49a1e" /></StatusIcon>
      <StatusIcon label="自动缩放" className="w-[41px]"><path d="M17 3l3 8 8 11-7-1-4-7-4 7-7 1 9-12zM6 1L3 9l6 1z" fill="#ccc" stroke="#888" /></StatusIcon>
      <StatusIcon label="切换工作空间" className="ml-[13px] w-[41px]">
        <circle cx="15" cy="12" r="9.5" strokeWidth="4" strokeDasharray="4 3.46" />
        <circle cx="15" cy="12" r="8" fill="#eee" />
        <circle cx="15" cy="12" r="4" fill="#bbb" />
        <path d="M30 17v7h-7z" fill="#000" stroke="none" />
      </StatusIcon>
      <StatusIcon label="锁定" className="w-[36px]"><path d="M2 11h16v11H2z" fill="#eee" /><path d="M15 11V6c0-5 11-5 11 0v5M10 14v5" /></StatusIcon>
      <StatusIcon label="隔离对象" className="w-[44px]">
        <path d="M15 1c-9 0-10 8-4 13v2h8v-2c6-5 5-13-4-13z" fill="#fdf7a8" stroke="#b59c3e" />
        <path d="M12 20h6" />
      </StatusIcon>
      <button aria-label="状态栏菜单" className={clsx(STATUS_BTN, GREY, 'ml-[13px] w-[19px]')}><Caret className="text-black" /></button>
      <StatusIcon label="全屏显示" className="ml-[2px] w-[40px]"><path d="M3 2h25v20H3z" fill="#f4f4f4" /><path d="M3 4h25" strokeWidth="4" /></StatusIcon>
      <svg viewBox="0 0 20 20" className="ml-[8px] mr-[4px] mt-[10px] w-[20px] h-[20px]" fill="#ddd" aria-hidden="true">
        <path d="M16 0h3v3h-3zM10 7h3v3h-3zM16 7h3v3h-3zM4 14h3v3H4zM10 14h3v3h-3zM16 14h3v3h-3z" />
      </svg>
    </footer>
  );
}

const Watermark = () => (
  <div className="absolute z-40 right-[79px] top-[46px] flex flex-col items-end pointer-events-none font-['Noto_Sans_CJK_SC',sans-serif] font-medium">
    <p className="flex items-center gap-[4px] text-[60px] leading-[60px] text-[#e4e4e4] opacity-60">
      搜狐<span className="px-[2px] rounded-[8px] bg-[#e4e4e4] text-[#777]">视频</span>
    </p>
    <p className="text-[42px] leading-[48px] font-bold text-[#f4f4f4] opacity-50 font-['Liberation_Sans',sans-serif]">tv.sohu.com</p>
  </div>
);

export default function App() {
  return (
    <div className="relative h-screen w-full flex flex-col overflow-hidden bg-[#666468]">
      <Header />
      <FileTabs />
      <Toolbars />
      <div className="mt-[8px] flex-1 min-h-0 flex">
        <div className="w-[116px] shrink-0 flex gap-[9px] pl-[9px]">
          <Palette icons={DRAW} />
          <Palette icons={MODIFY} />
        </div>
        <DrawingWindow />
        <div className="w-[60px] shrink-0 pl-[9px]">
          <Palette icons={DIMENSION} />
        </div>
      </div>
      <CommandLine />
      <StatusBar />
      <Watermark />
    </div>
  );
}
